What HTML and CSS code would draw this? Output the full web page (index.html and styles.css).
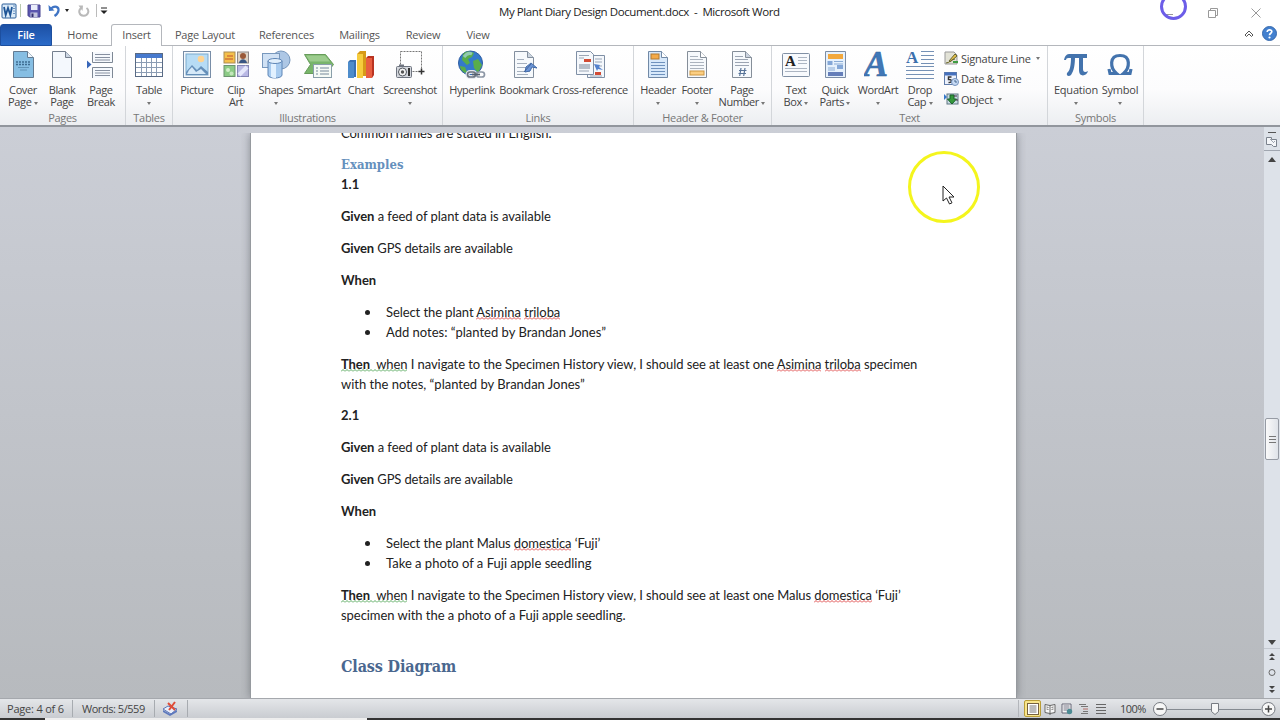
FILE: index.html
```html
<!DOCTYPE html>
<html lang="en">
<head>
    <meta charset="UTF-8">
    <meta name="viewport" content="width=device-width, initial-scale=1.0">
    <title>My Plant Diary Design Document.docx - Microsoft Word</title>
    <link rel="stylesheet" href="styles.css">
</head>
<body>
    <div class="window">
        <header class="titlebar">
            <div class="quick-access">
                <svg class="word-logo" width="16" height="16" viewBox="0 0 16 16"><rect x="1" y="1" width="14" height="14" rx="1" fill="#dcebf8" stroke="#2c5f99"/><path d="M12 3h2M12 5.500h2M12 8h2M12 10.500h2" stroke="#6a94c4"/><path d="M3 4l1.700 8 2.300-7 2.300 7L11 4" fill="none" stroke="#1f5596" stroke-width="1.800"/></svg>
                <span class="sep green"></span>
                <svg class="save" width="14" height="14" viewBox="0 0 14 14"><path d="M1 1h12v12H2.500L1 11.500z" fill="#5b56ae" stroke="#47438f"/><rect x="4" y="1" width="6.500" height="5" fill="#e9ecfa"/><rect x="3.500" y="8.500" width="7" height="4.500" fill="#c3c5df"/><rect x="4.500" y="9.500" width="2" height="3.500" fill="#332f70"/></svg>
                <svg class="undo" width="13" height="13" viewBox="0 0 13 13"><path d="M3 4.500C7 1 11 3 10.500 6.500 10.200 9 8 11 6.500 12" fill="none" stroke="#3f74c4" stroke-width="2.200"/><path d="M.5 1l.5 6 5.500-.5z" fill="#3f74c4"/></svg>
                <i class="arrow dark"></i>
                <svg class="redo" width="12" height="12" viewBox="0 0 12 12"><path d="M4 2.500C-.5 5 1 10.500 5.500 10.700 10 11 12 5.500 8.500 3" fill="none" stroke="#b9b9b9" stroke-width="2"/><path d="M5 .5H.5L4.500 6z" fill="#b9b9b9"/></svg>
                <span class="sep"></span>
                <svg width="8" height="8" viewBox="0 0 8 8"><path d="M1 1h6" stroke="#222"/><path d="M.5 3.500h7L4 7z" fill="#222"/></svg>
            </div>
            <h1 class="title">My Plant Diary Design Document.docx&nbsp; -&nbsp; Microsoft Word</h1>
            <div class="window-buttons">
                <svg width="12" height="10" viewBox="0 0 12 10"><path d="M1 6.500h9" stroke="#999"/></svg>
                <svg width="10" height="10" viewBox="0 0 10 10"><path d="M.5 2.500h7v7h-7zM2.500 2.500v-2h7v7h-2" fill="none" stroke="#999"/></svg>
                <svg width="10" height="10" viewBox="0 0 10 10"><path d="M.5.5l9 9M9.500.5l-9 9" stroke="#999"/></svg>
            </div>
        </header>

        <nav class="tabs">
            <a class="tab file">File</a>
            <a class="tab home">Home</a>
            <a class="tab active">Insert</a>
            <a class="tab layout">Page Layout</a>
            <a class="tab references">References</a>
            <a class="tab mailings">Mailings</a>
            <a class="tab review">Review</a>
            <a class="tab view-tab">View</a>
            <div class="help">
                <svg width="10" height="8" viewBox="0 0 10 8"><path d="M1 5l4-4 4 4-1.500 1.500L5 4 2.500 6.500z" fill="#fff" stroke="#555"/></svg>
                <svg width="15" height="15" viewBox="0 0 15 15"><circle cx="7.500" cy="7.500" r="7" fill="#4380cf" stroke="#3769ac"/><path d="M5.200 6c0-3 4.800-2.700 4.600-.2C9.700 7.300 7.500 7.200 7.500 9.300" fill="none" stroke="#fff" stroke-width="1.700"/><circle cx="7.500" cy="11.500" r="1.100" fill="#fff"/></svg>
            </div>
        </nav>

        <section class="ribbon">
            <div class="group pages">
                <div class="tools">
                    <button class="tool w40">
                        <svg width="28" height="30" viewBox="0 0 28 30"><path d="M4.500 1.500h14l6 6v20h-20z" fill="#86bee3" stroke="#637a91"/><path d="M18.500 1.500v6h6" fill="#eef6fc" stroke="#637a91"/><path d="M7 12h14M7 14.500h14" stroke="#3e6d92" stroke-width="1.500" stroke-dasharray="2 1"/><path d="M9 17.500h11M11 20h7" stroke="#6294b8"/></svg>
                        <span>Cover<br>Page <i class="arrow"></i></span>
                    </button>
                    <button class="tool w38">
                        <svg width="28" height="30" viewBox="0 0 28 30"><path d="M4.500 1.500h13l6 6v20h-19z" fill="#f4f8fd" stroke="#747f8e"/><path d="M17.500 1.500v6h6" fill="#cbd5e2" stroke="#747f8e"/></svg>
                        <span>Blank<br>Page</span>
                    </button>
                    <button class="tool w40">
                        <svg width="28" height="30" viewBox="0 0 28 30"><path d="M5.500 2v10.500h20V2M5.500 28V17.500h20V28" fill="#f6f9fd" stroke="#7e8895"/><path d="M8 4.500h15M8 7.500h15M8 10h15M8 20.500h15M8 23h15M8 25.500h15" stroke="#8790a0"/><path d="M0 10.500l4.500 4-4.500 4z" fill="#3866b9"/></svg>
                        <span>Page<br>Break</span>
                    </button>
                </div>
                <div class="group-name">Pages</div>
            </div>

            <div class="group tables">
                <div class="tools">
                    <button class="tool w46">
                        <svg width="28" height="30" viewBox="0 0 28 30"><rect x=".5" y="3.500" width="27" height="23" fill="#fff" stroke="#596a84"/><path d="M1 4h26v4H1z" fill="#4679cd"/><path d="M1 12.500h26M1 17.500h26M1 22.500h26M6.500 8v18M11.500 8v18M16.500 8v18M21.500 8v18" stroke="#8b9cb3"/></svg>
                        <span>Table<br><i class="arrow"></i></span>
                    </button>
                </div>
                <div class="group-name">Tables</div>
            </div>

            <div class="group illustrations">
                <div class="tools">
                    <button class="tool w46">
                        <svg width="28" height="30" viewBox="0 0 28 30"><rect x=".5" y="1.500" width="27" height="26" fill="#f5f9fd" stroke="#788da7"/><rect x="3" y="4" width="22" height="21" fill="#b7dcf5" stroke="#7ca9cc"/><circle cx="18" cy="9" r="3.300" fill="#ffd492"/><path d="M3 22l6-7 5 5 4-4 7 6v3H3z" fill="#658fb9"/><path d="M6 20l3-3 4 5 5-3 5 5H4z" fill="#d6e9f8"/></svg>
                        <span>Picture</span>
                    </button>
                    <button class="tool w32">
                        <svg width="28" height="30" viewBox="0 0 28 30"><rect x="2" y="2" width="11" height="11" fill="#f5c04b" stroke="#a98b55"/><path d="M3 9h8M5 6h6" stroke="#c2502f" fill="none"/><rect x="15.500" y="2" width="11" height="11" fill="#ddd3c5" stroke="#8d8787"/><circle cx="21" cy="6" r="3" fill="#9a5938"/><path d="M17 13c1-5 7-5 8 0" fill="#395583"/><rect x="2" y="15.500" width="11" height="11" fill="#8ccb86" stroke="#6d9370"/><circle cx="6" cy="20" r="2" fill="#d3efc9"/><circle cx="9.500" cy="23.500" r="2" fill="#c3e7bb"/><rect x="15.500" y="15.500" width="11" height="11" fill="#b9b8e4" stroke="#8586b5"/><path d="M17 25l8-8" stroke="#e5e7fb" stroke-width="4"/></svg>
                        <span>Clip<br>Art</span>
                    </button>
                    <button class="tool w48">
                        <svg width="30" height="30" viewBox="0 0 30 30"><circle cx="20" cy="10" r="9" fill="#adc7e5" stroke="#7797bc"/><rect x="1.500" y="3.500" width="17" height="14" fill="#d0e1f4" stroke="#7898bd"/><path d="M7 11v14c0 4 14 4 14 0V11" fill="#a8cbef" stroke="#5f86b6"/><path d="M10 13v14c2 1 4 1 5 1V13" fill="#e2f1ff"/><ellipse cx="14" cy="11" rx="7" ry="2.500" fill="#e1effc" stroke="#5f86b6"/></svg>
                        <span>Shapes<br><i class="arrow"></i></span>
                    </button>
                    <button class="tool w38">
                        <svg width="30" height="30" viewBox="0 0 30 30"><path d="M.5 4.500h21l8 10-7 9H.5l6-9z" fill="#78b56a" stroke="#679b5a"/><path d="M2 5.500h19l5 6H6z" fill="#9ccc8d"/><rect x="9.500" y="14.500" width="18" height="13" fill="#f5faf5" stroke="#899eaa"/><path d="M12 18h2M12 21h2M12 24h2M16 18h9M16 21h9M16 24h9" stroke="#74889a"/></svg>
                        <span>SmartArt</span>
                    </button>
                    <button class="tool w46">
                        <svg width="28" height="30" viewBox="0 0 28 30"><path d="M1 12l2-2h6v17H1z" fill="#3870b3"/><path d="M1 12h6v16H1z" fill="#4d8ccb"/><path d="M10 4l3-3h6v25h-9z" fill="#d79a18"/><path d="M10 4h6v24h-6z" fill="#f6cc3d"/><path d="M19 8l2-2h6v19l-2 3h-6z" fill="#b93321"/><path d="M19 8h6v20h-6z" fill="#e85d40"/></svg>
                        <span>Chart</span>
                    </button>
                    <button class="tool w52">
                        <svg width="30" height="30" viewBox="0 0 30 30"><rect x="5.500" y="1.500" width="21" height="20" fill="none" stroke="#777" stroke-dasharray="2 1"/><path d="M23.500 21.500h6M26.500 18.500v6" stroke="#333" stroke-width="1.500"/><rect x="1.500" y="16.500" width="15" height="11" rx="1" fill="#d3d6dc" stroke="#6f7580"/><path d="M4 15.500h5" stroke="#6f7580" stroke-width="2"/><circle cx="7.500" cy="22" r="4" fill="#f5f5f5" stroke="#52575f"/><circle cx="7.500" cy="22" r="1.700" fill="#555"/><path d="M14 18v8" stroke="#333" stroke-width="2"/></svg>
                        <span>Screenshot<br><i class="arrow"></i></span>
                    </button>
                </div>
                <div class="group-name">Illustrations</div>
            </div>

            <div class="group links">
                <div class="tools">
                    <button class="tool w50">
                        <svg width="28" height="30" viewBox="0 0 28 30"><circle cx="12.500" cy="13" r="12" fill="#347acb" stroke="#315da2"/><path d="M5 4c4-4 9-2 11-1l-2 4-4 2 2 4-3 2-5-5zM15 11l5-2 4 6-4 8-4-5zM2 16l5 1 2 5-2 1C4 21 2 19 2 16z" fill="#59ad4b"/><path d="M6 7c3-4 6-4 8-3" stroke="#b9ddf7" stroke-width="3" opacity=".6" fill="none"/><rect x="9.500" y="22" width="8" height="5" rx="2.500" fill="none" stroke="#e4e7ed" stroke-width="4"/><rect x="9.500" y="22" width="8" height="5" rx="2.500" fill="none" stroke="#69727f" stroke-width="1.700"/><rect x="18.500" y="22" width="8" height="5" rx="2.500" fill="none" stroke="#8c96a5" stroke-width="1.700"/><path d="M14 24.500h8" stroke="#555f6d" stroke-width="1.700"/></svg>
                        <span>Hyperlink</span>
                    </button>
                    <button class="tool w54">
                        <svg width="28" height="30" viewBox="0 0 28 30"><path d="M4.500 1.500h13l6 6v20h-19z" fill="#f6f9fc" stroke="#838f9e"/><path d="M17.500 1.500v6h6" fill="#ccd5df" stroke="#838f9e"/><path d="M7 9.500h7M7 13.500h10M7 17.500h9M7 21.500h13M7 24.500h11" stroke="#a5afbd"/><path d="M21 13l6 5-5-1-2 4-5 1 1-5z" fill="#6b94d5" stroke="#426ba9"/><path d="M21 14l-7 8" stroke="#42639c"/></svg>
                        <span>Bookmark</span>
                    </button>
                    <button class="tool w78">
                        <svg width="30" height="30" viewBox="0 0 30 30"><path d="M12.500 5.500h17v22h-17z" fill="#f5f8fc" stroke="#7f8fa5"/><path d="M20 9h7M20 12h7M20 16h7M15 26h12" stroke="#9aa6b7"/><path d="M1.500 1.500h14l3 3v20h-17z" fill="#f5f8fc" stroke="#7f8fa5"/><path d="M4 5.500h10M4 8h5M4 21h10" stroke="#9ba6b5"/><path d="M4 14h11v5H4z" fill="#b7bfca"/><rect x="9" y="9" width="7" height="3" fill="#d24b34"/><rect x="20" y="22" width="6" height="3" fill="#d24b34"/><path d="M19 14l6 1-1 2 4 3-5-1-1 2z" fill="#5582cd"/></svg>
                        <span>Cross-reference</span>
                    </button>
                </div>
                <div class="group-name">Links</div>
            </div>

            <div class="group header-footer">
                <div class="tools">
                    <button class="tool w40">
                        <svg width="28" height="30" viewBox="0 0 28 30"><path d="M4.500 1.500h13l6 6v20h-19z" fill="#d7e8fa" stroke="#7189a6"/><path d="M17.500 1.500v6h6" fill="#fff" stroke="#7189a6"/><rect x="7" y="4" width="8" height="5" fill="#f4aa48" stroke="#b47b31"/><path d="M7 12.500h14M7 15.500h14M7 18.500h14M7 21.500h14M7 24.500h14" stroke="#6e91bd"/></svg>
                        <span>Header<br><i class="arrow"></i></span>
                    </button>
                    <button class="tool w38">
                        <svg width="28" height="30" viewBox="0 0 28 30"><path d="M4.500 1.500h13l6 6v20h-19z" fill="#f6f9fc" stroke="#858e99"/><path d="M17.500 1.500v6h6" fill="#fff" stroke="#858e99"/><path d="M7 6.500h8M7 9.500h13M7 12.500h14M7 15.500h14M7 18.500h14" stroke="#abb3be"/><rect x="7" y="21" width="14" height="4" fill="#fbce82" stroke="#ce963f"/></svg>
                        <span>Footer<br><i class="arrow"></i></span>
                    </button>
                    <button class="tool w52">
                        <svg width="28" height="30" viewBox="0 0 28 30"><path d="M4.500 1.500h13l6 6v20h-19z" fill="#f6f9fc" stroke="#858e99"/><path d="M17.500 1.500v6h6" fill="#cbd3df" stroke="#858e99"/><path d="M7 6.500h8M7 9.500h13M7 12.500h14M7 15.500h14" stroke="#9ba4b2"/><path d="M13 18l-1.300 8M17 18l-1.300 8M11 20.500h7.500M10.500 23.500h7.500" stroke="#577397" stroke-width="1.200"/></svg>
                        <span>Page<br>Number <i class="arrow"></i></span>
                    </button>
                </div>
                <div class="group-name">Header &amp; Footer</div>
            </div>

            <div class="group text">
                <div class="tools">
                    <button class="tool w40">
                        <svg width="30" height="30" viewBox="0 0 30 30"><rect x="1.500" y="3.500" width="27" height="23" rx="1" fill="#f8fafd" stroke="#8190a4"/><path d="M17 7.500h9M17 10.500h9M17 13.500h9M4 18.500h22M4 21.500h22" stroke="#acb5c2"/><text x="4" y="16" class="glyph box-a">A</text></svg>
                        <span>Text<br>Box <i class="arrow"></i></span>
                    </button>
                    <button class="tool w38">
                        <svg width="28" height="30" viewBox="0 0 28 30"><path d="M4.500 1.500h20v26h-20z" fill="#e6f1fc" stroke="#7c8da5"/><path d="M7 4h15v5H7z" fill="#f2a83d"/><rect x="6.500" y="11" width="5" height="4" fill="#84a7d7"/><rect x="16" y="15" width="6" height="4" fill="#84a7d7"/><path d="M13 11.500h9M13 14h9M7 18h7M7 20h7" stroke="#8aabd5"/><rect x="7" y="22" width="15" height="4" fill="#657eb9"/></svg>
                        <span>Quick<br>Parts <i class="arrow"></i></span>
                    </button>
                    <button class="tool w48">
                        <svg width="28" height="30" viewBox="0 0 28 30"><text x="0" y="26" class="glyph art-a">A</text></svg>
                        <span>WordArt<br><i class="arrow"></i></span>
                    </button>
                    <button class="tool w36">
                        <svg width="30" height="30" viewBox="0 0 30 30"><path d="M16 1.500h13M16 5.500h13M16 9.500h13M16 13.500h13M1 16.500h28M1 20.500h28M1 24.500h28M1 28.500h28" stroke="#7591b5"/><text x="1" y="13" class="glyph drop-a">A</text></svg>
                        <span>Drop<br>Cap <i class="arrow"></i></span>
                    </button>
                    <div class="small-tools">
                        <button class="small-tool">
                            <svg width="15" height="14" viewBox="0 0 15 14"><path d="M1 1h9l3 3v9H1z" fill="#e2e2d6" stroke="#999"/><path d="M2 12c4 0 5-4 9-4M5 10l6-7 2 2-7 6z" fill="#e8c24c" stroke="#66652f"/><path d="M9 11h5" stroke="#3f9c42" stroke-width="2"/></svg>
                            Signature Line <i class="arrow"></i>
                        </button>
                        <button class="small-tool">
                            <svg width="15" height="14" viewBox="0 0 15 14"><rect x=".5" y=".5" width="12" height="12" fill="#edf2fd" stroke="#617dab"/><path d="M1 2h11" stroke="#4570bd" stroke-width="3"/><path d="M7.500 5H4.500v2.500c4-.5 4 3.500 0 3" fill="none" stroke="#333" stroke-width="1.500"/><circle cx="11" cy="10" r="3.500" fill="#c7daf4" stroke="#7592bd"/><path d="M11 8v2h2" fill="none" stroke="#47688f"/></svg>
                            Date &amp; Time
                        </button>
                        <button class="small-tool">
                            <svg width="15" height="14" viewBox="0 0 15 14"><rect x="3" y="2" width="11" height="10" fill="#c8dbe3" stroke="#607782"/><path d="M0 2l3 3-3 3z" fill="#3779cb"/><path d="M6 3h4v4h2.500L8 12 3.500 7H6z" fill="#35983b" stroke="#19632a"/><path d="M10 4h3M12 8h2" stroke="#424"/></svg>
                            Object <i class="arrow"></i>
                        </button>
                    </div>
                </div>
                <div class="group-name">Text</div>
            </div>

            <div class="group symbols">
                <div class="tools">
                    <button class="tool w44">
                        <svg width="28" height="30" viewBox="0 0 28 30"><path d="M2 10C3 5 5 4 8 4h17v4H8c-2 0-4 0-4 2zM9 7h4c0 7-1 14-4 18-2 2-5 1-4-2 3-2 4-8 4-16zM17 7h4v12c0 3 2 4 5 2-1 5-9 7-9-1z" fill="#4373ad"/></svg>
                        <span>Equation<br><i class="arrow"></i></span>
                    </button>
                    <button class="tool w44">
                        <svg width="28" height="30" viewBox="0 0 28 30"><path d="M3 19l1 4.500h6.500C4 18 3 5.500 14 5.500S24 18 17.500 23.500H24l1-4.500" fill="none" stroke="#4373ad" stroke-width="3.200"/></svg>
                        <span>Symbol<br><i class="arrow"></i></span>
                    </button>
                </div>
                <div class="group-name">Symbols</div>
            </div>
        </section>

        <main class="workspace">
            <article class="page">
                <p class="intro">Common names are stated in English.</p>
                <h3>Examples</h3>
                <p><b>1.1</b></p>
                <p class="feed"><b>Given</b> a feed of plant data is available</p>
                <p class="gps"><b>Given</b> GPS details are available</p>
                <p><b>When</b></p>
                <ul>
                    <li class="tight">Select the plant <span class="spell">Asimina</span> <span class="spell">triloba</span></li>
                    <li>Add notes: “planted by Brandan Jones”</li>
                </ul>
                <p class="then"><span class="tight"><span class="grammar"><b>Then</b>&nbsp; when</span> I navigate to the Specimen History view, I should see at least one <span class="spell">Asimina</span> <span class="spell">triloba</span> specimen</span><br>with the notes, “planted by Brandan Jones”</p>
                <p class="second"><b>2.1</b></p>
                <p class="feed"><b>Given</b> a feed of plant data is available</p>
                <p class="gps"><b>Given</b> GPS details are available</p>
                <p><b>When</b></p>
                <ul>
                    <li class="tight">Select the plant Malus <span class="spell">domestica</span> ‘Fuji’</li>
                    <li>Take a photo of a Fuji apple seedling</li>
                </ul>
                <p class="then"><span class="tight"><span class="grammar"><b>Then</b>&nbsp; when</span> I navigate to the Specimen History view, I should see at least one Malus <span class="spell">domestica</span> ‘Fuji’</span><br><span class="feed">specimen with the a photo of a Fuji apple seedling.</span></p>
                <h2>Class Diagram</h2>
            </article>
            <aside class="scrollbar">
                <svg class="ruler" width="16" height="20" viewBox="0 0 16 20"><path d="M4 1.500h8" stroke="#555"/><path d="M2.500 6.500h5v2h5v7h-3l-2-2h-5z" fill="#f4f6f9" stroke="#7b828d"/><path d="M6 8l4 4M9 12l2-2M0 19.500h16" stroke="#a0a6b0"/></svg>
                <i class="up"></i>
                <div class="track"><div class="thumb"><i></i><i></i><i></i></div></div>
                <i class="down"></i>
                <svg class="browse" width="16" height="50" viewBox="0 0 16 50"><path d="M0 .5h16" stroke="#c3c8d0"/><path d="M5 8l3-3 3 3zM5 12l3-3 3 3z" fill="#444"/><circle cx="8" cy="24.500" r="3" fill="none" stroke="#666"/><path d="M5 38l3 3 3-3zM5 42l3 3 3-3z" fill="#444"/></svg>
            </aside>
        </main>

        <footer class="statusbar">
            <span class="status page-count">Page: 4 of 6</span>
            <span class="status words">Words: 5/559</span>
            <span class="status proof"><svg width="16" height="15" viewBox="0 0 16 15"><path d="M1 8l5-3 9 3-6 5z" fill="#e9eef9" stroke="#5a76b8"/><path d="M1 9l7 4 7-4v2l-7 4-7-4z" fill="#5d78bd"/><path d="M6 2l7 7M13 1L7 9" stroke="#df4c38" stroke-width="2"/></svg></span>
            <div class="views">
                <span class="view selected"><svg width="12" height="12" viewBox="0 0 12 12"><rect x=".5" y=".5" width="11" height="11" fill="#fff" stroke="#76613e"/><path d="M2.500 3h7M2.500 5h7M2.500 7h7M2.500 9h7" stroke="#777"/></svg></span>
                <span class="view"><svg width="12" height="12" viewBox="0 0 12 12"><path d="M1 1.500l5 1 5-1v8l-5 1-5-1zM6 2.500V12" fill="#f8f8f8" stroke="#666"/><path d="M2.500 4l2 .5M2.500 6l2 .5M7.500 4.500l2-.5M7.500 6.500l2-.5" stroke="#777"/></svg></span>
                <span class="view"><svg width="12" height="12" viewBox="0 0 12 12"><path d="M1 1h9v9H1z" fill="#f6f6f6" stroke="#667"/><path d="M2.500 3h6M2.500 5h6M2.500 7h4" stroke="#778"/><circle cx="8.500" cy="8.500" r="2.700" fill="#4c8b93"/></svg></span>
                <span class="view"><svg width="12" height="12" viewBox="0 0 12 12"><path d="M1 1.500h7M3 3.500h7M5 8.500h5M3 10.500h7" stroke="#777"/><path d="M5 6h5" stroke="#b36f68"/></svg></span>
                <span class="view"><svg width="12" height="12" viewBox="0 0 12 12"><path d="M1 1.500h10M1 4.500h10M1 7.500h10M1 10.500h10" stroke="#666"/></svg></span>
            </div>
            <span class="percent">100%</span>
            <svg class="zoom" width="124" height="18" viewBox="0 0 124 18"><path d="M15 9.500h94" stroke="#858a91"/><circle cx="8" cy="9" r="6.500" fill="#f7f7f7" stroke="#777b82"/><path d="M4.500 9h7" stroke="#444" stroke-width="1.500"/><path d="M59.500 3.500h7v8l-3.500 3-3.500-3z" fill="#f7f7f7" stroke="#777b82"/><circle cx="116.500" cy="9" r="6.500" fill="#f7f7f7" stroke="#777b82"/><path d="M113 9h7M116.500 5.500v7" stroke="#444" stroke-width="1.500"/></svg>
        </footer>
        <div class="desktop-edge"><i></i><b></b></div>
    </div>

    <div class="click-ring"></div>
    <div class="pointer-ring"></div>
    <svg class="pointer" width="13" height="20" viewBox="0 0 13 20"><path d="M1 1v15l3.500-3 3 6 2.500-1.200-3-5.800H12z" fill="#fff" stroke="#222"/></svg>
</body>
</html>
```
FILE: styles.css
```css
*{
    margin: 0;
    padding: 0;
    box-sizing: border-box;
}
body{
    width: 1280px;
    height: 720px;
    overflow: hidden;
    position: relative;
    font-family: "Open Sans", "Noto Sans", sans-serif;
    font-size: 11px;
    color: #444;
    background: #fff;
}
svg{
    display: block;
    flex-shrink: 0;
}
button{
    border: none;
    background: none;
    font: inherit;
    color: inherit;
}
.window{
    height: 720px;
    display: flex;
    flex-direction: column;
}

/* title bar */
.titlebar{
    height: 24px;
    display: grid;
    grid-template-columns: 499px 1fr 120px;
}
.quick-access{
    display: flex;
    align-items: center;
    padding: 0 0 3px 1px;
}
.sep{
    width: 1px;
    height: 13px;
    background: #bbb;
    margin-right: 3px;
}
.sep.green{
    background: #b9c9ae;
    margin: 0 6px 0 3px;
}
.undo{
    margin-left: 7px;
}
.redo{
    margin: 0 6px 0 9px;
}
.arrow{
    display: inline-block;
    border: 2.5px solid transparent;
    border-top: 3px solid #777;
    border-bottom: none;
    vertical-align: middle;
}
.arrow.dark{
    border-top-color: #222;
    margin-left: 4px;
}
.title{
    font-size: 11.5px;
    font-weight: 400;
    line-height: 24px;
    letter-spacing: -0.42px;
    color: #222;
    white-space: nowrap;
}
.window-buttons{
    display: flex;
    align-items: center;
    gap: 33px;
    padding: 2px 0 0 3px;
}

/* tabs */
.tabs{
    height: 22px;
    display: flex;
    border-bottom: 1px solid #b4b7bc;
}
.tab{
    height: 22px;
    line-height: 22px;
    text-align: center;
    font-size: 11px;
    letter-spacing: -0.2px;
    color: #555;
    white-space: nowrap;
}
.file{
    width: 52px;
    color: #fff;
    background: linear-gradient(#1d50a4, #2b6bc8);
    border: 1px solid #1d4f9f;
    border-radius: 3px 3px 0 0;
    line-height: 20px;
    font-weight: 600;
}
.home{
    width: 59px;
    padding-left: 2px;
}
.active{
    width: 51px;
    border: 1px solid #b4b7bc;
    border-bottom: none;
    border-radius: 3px 3px 0 0;
    background: #fff;
    line-height: 20px;
}
.layout{ width: 86px; }
.references{ width: 77px; }
.mailings{ width: 69px; }
.review{ width: 58px; }
.view-tab{ width: 52px; }
.help{
    margin-left: auto;
    display: flex;
    align-items: center;
    gap: 8px;
    padding: 0 3px 2px 0;
}

/* ribbon */
.ribbon{
    height: 81px;
    display: flex;
    background: linear-gradient(#fff, #fcfcfd 55%, #eceef1);
    border-bottom: 2px solid #92969d;
}
.group{
    border-right: 1px solid #d3d6da;
    display: flex;
    flex-direction: column;
}
.pages{ width: 126px; }
.tables{ width: 47px; }
.illustrations{ width: 270px; }
.links{ width: 191px; }
.header-footer{ width: 138px; }
.text{ width: 276px; }
.symbols{ width: 96px; }
.tools{
    display: flex;
    height: 65px;
    padding-left: 4px;
}
.pages .tools{ padding-left: 3px; }
.tables .tools{ padding-left: 0; }
.illustrations .tools{ padding-left: 1px; }
.symbols .tools{ padding-left: 6px; }
.tool{
    display: flex;
    flex-direction: column;
    align-items: center;
    padding-top: 4px;
    line-height: 12px;
    letter-spacing: -0.38px;
    white-space: nowrap;
}
.tool span{
    margin-top: 4px;
}
.w32{ width: 32px; }
.w36{ width: 36px; }
.w38{ width: 38px; }
.w40{ width: 40px; }
.w44{ width: 44px; }
.symbols .tool{ letter-spacing: -0.2px; }
.w46{ width: 46px; }
.w48{ width: 48px; }
.w50{ width: 50px; }
.w52{ width: 52px; }
.w54{ width: 54px; }
.w78{ width: 78px; }
.group-name{
    text-align: center;
    line-height: 14px;
    letter-spacing: -0.3px;
    color: #777;
}
.small-tools{
    padding: 2px 0 0 6px;
}
.small-tool{
    height: 20.5px;
    display: flex;
    align-items: center;
    gap: 2px;
    white-space: nowrap;
    letter-spacing: -0.25px;
}
.small-tool .arrow{
    margin-left: 3px;
}
.glyph{
    font-family: "Liberation Serif", serif;
    font-weight: 700;
    letter-spacing: 0;
}
.box-a{ font-size: 15px; fill: #222; }
.drop-a{ font-size: 17px; fill: #3c70ad; }
.art-a{
    font-size: 36px;
    font-style: italic;
    fill: #4078b8;
    stroke: #315f98;
    stroke-width: 0.5px;
}

/* document */
.workspace{
    height: 571px;
    display: flex;
    background: linear-gradient(#cbced6, #b7babe);
}
.page{
    width: 765px;
    height: 565px;
    margin: 6px 0 0 251px;
    padding-left: 90px;
    overflow: hidden;
    background: #fff;
    box-shadow: -1px 0 0 #969a9f, 1px 0 0 #969a9f, 0 0 9px rgba(70, 75, 82, 0.6);
    clip-path: inset(0 -10px 0 -10px);
    font-family: Lato, sans-serif;
    font-variant-ligatures: none;
    font-size: 13px;
    line-height: 20px;
    color: #222;
}
.page p{
    margin-bottom: 12px;
    white-space: nowrap;
}
.page .intro{
    margin: -10px 0 12px;
    letter-spacing: -0.06px;
}
h2, h3{
    font-family: "DejaVu Serif Condensed", "DejaVu Serif", serif;
    font-stretch: condensed;
    font-weight: 700;
}
h3{
    font-size: 13px;
    line-height: 20px;
    margin-bottom: -1px;
    color: #6590bd;
}
h2{
    margin-top: 32px;
    font-size: 16px;
    line-height: 20px;
    letter-spacing: -0.15px;
    color: #4a678f;
}
.page ul{
    list-style: none;
    margin-bottom: 12px;
}
.page li::before{
    content: "";
    display: inline-block;
    width: 5px;
    height: 5px;
    margin: 0 16px 0 24px;
    vertical-align: 2px;
    border-radius: 50%;
    background: #222;
}
.feed{
    letter-spacing: -0.05px;
}
.gps{
    letter-spacing: -0.12px;
}
.tight{
    letter-spacing: -0.08px;
}
.page .then{
    margin-bottom: 11px;
}
.spell, .grammar{
    background: url("data:image/svg+xml,%3Csvg xmlns='http://www.w3.org/2000/svg' width='4' height='3'%3E%3Cpath d='M0 2.500L2 .5l2 2' fill='none' stroke='%23df4a4a'/%3E%3C/svg%3E") repeat-x left bottom;
}
.grammar{
    background-image: url("data:image/svg+xml,%3Csvg xmlns='http://www.w3.org/2000/svg' width='4' height='3'%3E%3Cpath d='M0 2.500L2 .5l2 2' fill='none' stroke='%2356a85b'/%3E%3C/svg%3E");
}

.scrollbar{
    width: 16px;
    margin-left: auto;
    display: flex;
    flex-direction: column;
    align-items: center;
    background: #dde2e9;
}
.ruler{
    margin-top: 4px;
}
.up, .down{
    border: 4px solid transparent;
}
.up{
    border-bottom: 5px solid #444;
    border-top: none;
    margin-top: 6px;
}
.down{
    border-top: 5px solid #444;
    border-bottom: none;
    margin-bottom: 3px;
}
.track{
    flex: 1;
    width: 16px;
    padding: 256px 1px 0;
}
.thumb{
    height: 42px;
    border: 1px solid #969ba4;
    border-radius: 2px;
    background: linear-gradient(90deg, #fafafa, #dfe3e9);
    display: flex;
    flex-direction: column;
    justify-content: center;
    align-items: center;
    gap: 2px;
}
.thumb i{
    width: 7px;
    height: 1px;
    background: #777;
}

/* status bar */
.statusbar{
    height: 20px;
    display: flex;
    align-items: center;
    padding-right: 4px;
    background: linear-gradient(#e4e6e9, #c9ccd1);
    border-top: 1px solid #a5a8ad;
    white-space: nowrap;
}
.status{
    height: 17px;
    line-height: 18px;
    border-right: 1px solid #a7abb0;
    padding-left: 7px;
}
.page-count{ width: 73px; letter-spacing: -0.2px; }
.words{ width: 82px; padding-left: 9px; letter-spacing: -0.45px; }
.proof{ width: 33px; padding-top: 1px; }
.views{
    margin-left: auto;
    display: flex;
    padding-left: 5px;
    border-left: 1px solid #b3b6bb;
}
.view{
    display: flex;
    width: 17px;
    height: 17px;
    align-items: center;
    justify-content: center;
}
.view.selected{
    border: 1px solid #b99d36;
    border-radius: 2px;
    background: #f8e58c;
}
.percent{
    width: 26px;
    margin: 0 6px 0 11px;
    letter-spacing: -0.5px;
}
.desktop-edge{
    height: 2px;
    display: flex;
    justify-content: space-between;
    background: #eee;
}
.desktop-edge i{
    width: 45px;
    background: #333;
}
.desktop-edge b{
    width: 913px;
    background: #333;
}

/* pointer highlights */
.click-ring, .pointer-ring, .pointer{
    position: absolute;
}
.click-ring{
    left: 1160px;
    top: -7px;
    width: 27px;
    height: 27px;
    border: 3px solid #6c5de8;
    border-radius: 50%;
}
.pointer-ring{
    left: 908px;
    top: 151px;
    width: 72px;
    height: 72px;
    border: 3px solid #f4f51d;
    border-radius: 50%;
}
.pointer{
    left: 942px;
    top: 185px;
}
```
